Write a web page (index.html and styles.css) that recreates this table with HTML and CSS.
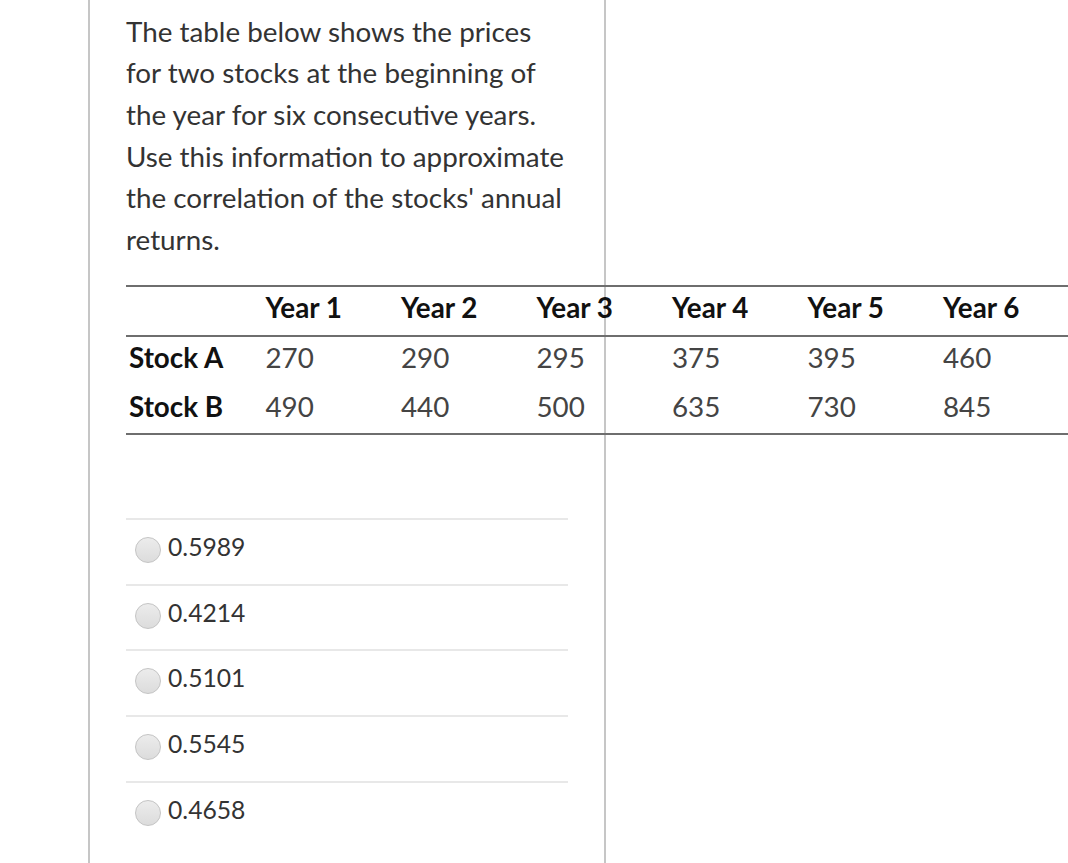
FILE: index.html
```html
<!DOCTYPE html>
<html lang="en">
<head>
<meta charset="utf-8">
<title>Question</title>
<link rel="stylesheet" href="styles.css">
</head>
<body>
<div class="page">
  <p class="prompt">The table below shows the prices<br>for two stocks at the beginning of<br>the year for six consecutive years.<br>Use this information to approximate<br>the correlation of the stocks' annual<br>returns.</p>
  <table class="prices">
    <colgroup>
      <col class="c"><col class="c"><col class="c"><col class="c"><col class="c"><col class="c"><col class="c">
    </colgroup>
    <thead>
      <tr><th></th><th>Year 1</th><th>Year 2</th><th>Year 3</th><th>Year 4</th><th>Year 5</th><th>Year 6</th></tr>
    </thead>
    <tbody>
      <tr><th>Stock A</th><td>270</td><td>290</td><td>295</td><td>375</td><td>395</td><td>460</td></tr>
      <tr><th>Stock B</th><td>490</td><td>440</td><td>500</td><td>635</td><td>730</td><td>845</td></tr>
    </tbody>
  </table>
  <ul class="answers">
    <li class="answer"><span class="radio"></span><span class="label">0.5989</span></li>
    <li class="answer"><span class="radio"></span><span class="label">0.4214</span></li>
    <li class="answer"><span class="radio"></span><span class="label">0.5101</span></li>
    <li class="answer"><span class="radio"></span><span class="label">0.5545</span></li>
    <li class="answer"><span class="radio"></span><span class="label">0.4658</span></li>
  </ul>
</div>
</body>
</html>
```
FILE: styles.css
```css
html, body {
  margin: 0;
  padding: 0;
  background: #ffffff;
  overflow: hidden;
}
body {
  font-family: Lato, "Liberation Sans", sans-serif;
  color: #333333;
}
.page {
  margin-left: 88px;
  width: 478px;
  min-height: 863px;
  padding-left: 36px;
  border-left: 2px solid #c6c6c6;
  border-right: 2px solid #c6c6c6;
  box-sizing: content-box;
  position: relative;
}
.prompt {
  margin: 0;
  padding-top: 10.5px;
  font-size: 27.8px;
  line-height: 41.7px;
  color: #333333;
  white-space: nowrap;
}
.prices {
  margin-top: 24.5px;
  border-collapse: collapse;
  table-layout: fixed;
  width: 948px;
  font-size: 27.8px;
  line-height: 30px;
  border-top: 2px solid #6e6e6e;
  border-bottom: 2px solid #6e6e6e;
}
.prices .c {
  width: 135.5px;
}
.prices th,
.prices td {
  padding: 6px 4px 12px 4px;
  text-align: left;
  white-space: nowrap;
}
.prices thead th {
  font-weight: 700;
  color: #111111;
  border-bottom: 2px solid #6e6e6e;
}
.prices tbody th {
  font-weight: 700;
  color: #111111;
  padding-left: 3px;
}
.prices td {
  font-weight: 400;
  color: #444444;
}
.prices tbody tr:last-child th,
.prices tbody tr:last-child td {
  padding-top: 7px;
  padding-bottom: 11px;
}
.answers {
  list-style: none;
  margin: 83px 0 0 0;
  padding: 0;
  width: 442px;
}
.answer {
  display: flex;
  align-items: flex-start;
  box-sizing: border-box;
  height: 65.6px;
  padding-top: 12px;
  border-top: 2px solid #e8e8e8;
}
.radio {
  flex: none;
  width: 26px;
  height: 26px;
  margin: 5px 7px 0 9px;
  border-radius: 50%;
  box-sizing: border-box;
  border: 1px solid #c4c4c4;
  background: linear-gradient(180deg, #ececec 0%, #dcdcdc 100%);
}
.label {
  margin-top: 3px;
  font-size: 24.7px;
  line-height: 24px;
  color: #333333;
}
```
